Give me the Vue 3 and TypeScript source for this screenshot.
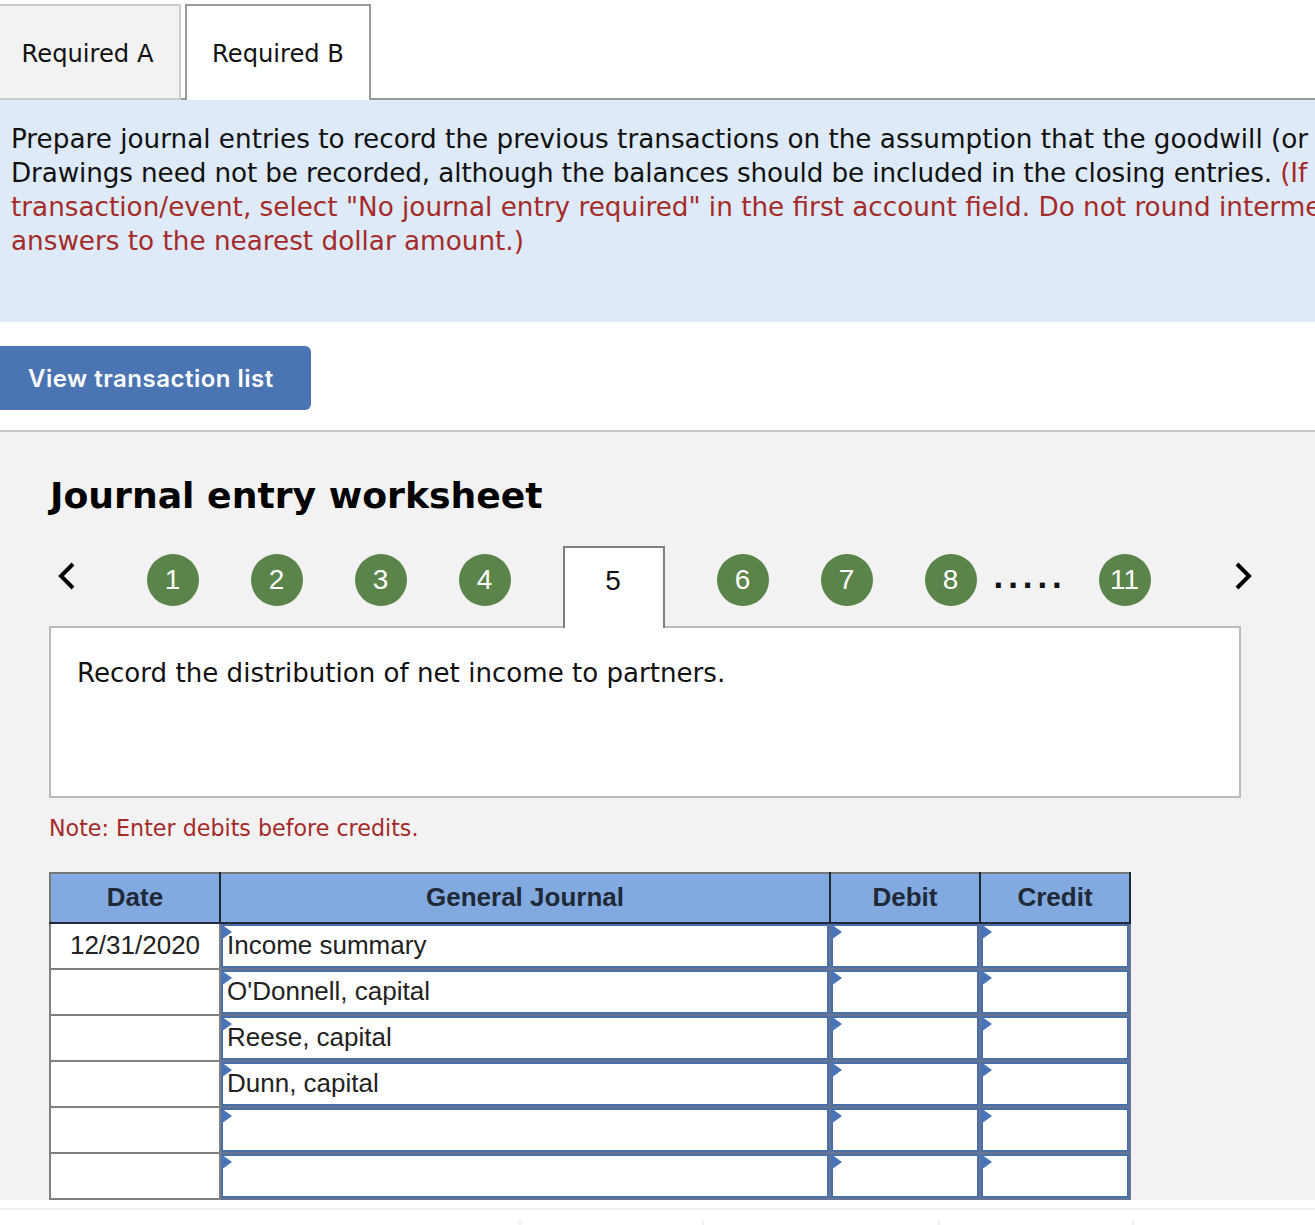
<template>
  <div class="page">
    <div class="tabs">
      <div class="tab">Required A</div>
      <div class="tab active">Required B</div>
    </div>

    <section class="prompt">
      <p v-for="(line, i) in promptLines" :key="i" :class="{ tight: line.tight }">
        {{ line.text }}<span v-if="line.red" class="red">{{ line.red }}</span>
      </p>
    </section>

    <div class="action-row">
      <button class="list-btn">View transaction list</button>
    </div>

    <section class="worksheet">
      <h2>Journal entry worksheet</h2>

      <div class="pager">
        <svg class="chevron prev" viewBox="0 0 20 30" width="20" height="30">
          <path d="M17 3 L5 15 L17 27" />
        </svg>
        <div class="steps">
          <template v-for="step in steps" :key="step">
            <span v-if="step === '5'" class="step-current">5</span>
            <span v-else class="step" :class="{ last: step === '11', 'before-dots': step === '8' }">{{ step }}</span>
            <span v-if="step === '8'" class="dots">.....</span>
          </template>
        </div>
        <svg class="chevron next" viewBox="0 0 20 30" width="20" height="30">
          <path d="M3 3 L15 15 L3 27" />
        </svg>
      </div>

      <div class="description">Record the distribution of net income to partners.</div>
      <p class="note">Note: Enter debits before credits.</p>

      <table class="journal">
        <colgroup>
          <col class="c-date" />
          <col class="c-account" />
          <col class="c-amount" />
          <col class="c-amount" />
        </colgroup>
        <thead>
          <tr>
            <th>Date</th>
            <th>General Journal</th>
            <th>Debit</th>
            <th>Credit</th>
          </tr>
        </thead>
        <tbody>
          <tr v-for="(row, i) in rows" :key="i">
            <td class="date">{{ row.date }}</td>
            <td class="entry"><div class="field">{{ row.account }}</div></td>
            <td class="entry"><div class="field"></div></td>
            <td class="entry"><div class="field"></div></td>
          </tr>
        </tbody>
      </table>
    </section>

    <div class="foot">
      <span v-for="n in 5" :key="n" />
    </div>
  </div>
</template>

<script setup lang="ts">
interface PromptLine {
  text: string
  red?: string
  tight?: boolean
}

// the reference cuts these lines off at the right edge
const promptLines: PromptLine[] = [
  { text: 'Prepare journal entries to record the previous transactions on the assumption that the goodwill (or' },
  { text: 'Drawings need not be recorded, although the balances should be included in the closing entries. ', red: '(If', tight: true },
  { text: '', red: 'transaction/event, select "No journal entry required" in the first account field. Do not round interme' },
  { text: '', red: 'answers to the nearest dollar amount.)' }
]

const steps = ['1', '2', '3', '4', '5', '6', '7', '8', '11']

const rows = [
  { date: '12/31/2020', account: 'Income summary' },
  { date: '', account: "O'Donnell, capital" },
  { date: '', account: 'Reese, capital' },
  { date: '', account: 'Dunn, capital' },
  { date: '', account: '' },
  { date: '', account: '' }
]
</script>

<style scoped>
.page {
  width: 1315px;
  height: 1225px;
  overflow: hidden;
  font-family: "DejaVu Sans", Verdana, sans-serif;
  color: #111;
}

.tabs {
  display: flex;
  gap: 4px;
  height: 100px;
  padding-top: 4px;
  box-sizing: border-box;
  border-bottom: 2px solid #999;
}

.tab {
  width: 183px;
  margin-left: -2px;
  height: 96px;
  box-sizing: border-box;
  padding-right: 4px;
  border: 2px solid #ccc;
  background: #f2f2f2;
  font-size: 24.2px;
  line-height: 96px;
  text-align: center;
}

.tab.active {
  width: 186px;
  margin-left: 0;
  padding-right: 0;
  border-color: #999;
  border-bottom: 0;
  background: #fff;
}

.prompt {
  height: 222px;
  box-sizing: border-box;
  padding: 22px 0 0 11px;
  background: #deeaf7;
  white-space: nowrap;
  font-size: 26.25px;
  line-height: 34px;
  overflow: hidden;
}

.prompt p {
  margin: 0;
  height: 34px;
}

.prompt p.tight {
  letter-spacing: -0.12px;
}

.red {
  color: #a52a2a;
}

.action-row {
  height: 110px;
  padding-top: 24px;
  box-sizing: border-box;
  border-bottom: 2px solid #c8c8c8;
}

.list-btn {
  display: block;
  width: 311px;
  height: 64px;
  padding: 0 0 0 28px;
  border: 0;
  border-radius: 0 6px 6px 0;
  background: #4a74b2;
  color: #fff;
  font-family: Inter, sans-serif;
  font-size: 24px;
  font-weight: 600;
  letter-spacing: 0.5px;
  text-align: left;
}

.worksheet {
  height: 768px;
  box-sizing: border-box;
  padding: 39px 0 0 49px;
  background: #f2f2f2;
}

h2 {
  margin: 0 0 0 1px;
  height: 50px;
  font-size: 36.2px;
  font-weight: 700;
  line-height: 50px;
  color: #000;
}

.pager {
  display: flex;
  align-items: flex-start;
  margin-top: 25px;
  width: 1210px;
  height: 80px;
}

.chevron {
  flex: none;
  margin-top: 15px;
  fill: none;
  stroke: #000;
  stroke-width: 4;
}

.chevron.prev {
  margin-left: 7px;
}

.chevron.next {
  margin-left: 83px;
}

.steps {
  display: flex;
  align-items: flex-start;
  margin-left: 71px;
  font-family: "Liberation Sans", Arial, sans-serif;
  font-size: 28px;
}

.step {
  flex: none;
  width: 52px;
  height: 52px;
  margin: 8px 52px 0 0;
  padding-right: 1px;
  box-sizing: border-box;
  border-radius: 50%;
  background: #5a844a;
  color: #fff;
  line-height: 52px;
  text-align: center;
}

.step.before-dots {
  margin-right: 16px;
}

.step.last {
  margin-right: 0;
}

.step-current {
  flex: none;
  position: relative;
  z-index: 1;
  width: 102px;
  height: 82px;
  margin: 0 52px 0 0;
  box-sizing: border-box;
  padding-right: 2px;
  border: 2px solid #808080;
  border-bottom: 0;
  background: #fff;
  line-height: 66px;
  text-align: center;
  color: #111;
}

.dots {
  flex: none;
  width: 68px;
  margin-right: 38px;
  font-family: "DejaVu Sans", sans-serif;
  font-size: 28px;
  font-weight: 700;
  letter-spacing: 4px;
  line-height: 66px;
  color: #111;
}

.description {
  width: 1192px;
  height: 172px;
  box-sizing: border-box;
  padding: 28px 26px;
  border: 2px solid #bbb;
  background: #fff;
  font-size: 26.1px;
  line-height: 34px;
}

.note {
  margin: 15px 0 0;
  height: 30px;
  font-size: 22.2px;
  line-height: 30px;
  color: #a52a2a;
}

.journal {
  width: 1082px;
  margin-top: 29px;
  border-collapse: collapse;
  table-layout: fixed;
  font-family: "Liberation Sans", Arial, sans-serif;
  font-size: 26px;
  color: #222;
}

.c-date {
  width: 170px;
}

.c-account {
  width: 610px;
}

.c-amount {
  width: 150px;
}

th {
  height: 46px;
  padding: 0 0 2px;
  border: 2px solid #1f2937;
  border-top-color: #777;
  background: #82aae0;
  font-weight: 700;
  color: #1f2937;
}

th:first-child {
  border-left-color: #777;
}

td {
  height: 44px;
  padding: 0;
  border: 2px solid #808080;
}

.date {
  background: #fff;
  padding-bottom: 2px;
  height: 42px;
  text-align: center;
}

.entry {
  border-color: #667591;
}

.field {
  position: relative;
  height: 44px;
  box-sizing: border-box;
  padding-left: 4px;
  border: 2px solid #4a6ea8;
  background: #fff;
  line-height: 38px;
  white-space: nowrap;
}

.field::before {
  content: "";
  position: absolute;
  left: -2px;
  top: -2px;
  border-top: 8px solid transparent;
  border-bottom: 8px solid transparent;
  border-left: 11px solid #4a74b8;
}

.foot {
  display: grid;
  grid-template-columns: 519px 183px 236px 194px 1fr;
  margin-top: 8px;
  border-top: 2px solid #f2f2f2;
}

.foot span {
  height: 6px;
  margin-top: 10px;
  border-left: 2px solid #f0f0f0;
}

.foot span:first-child {
  border-left: 0;
}
</style>

<style>
html,
body {
  margin: 0;
  background: #fff;
}
</style>
